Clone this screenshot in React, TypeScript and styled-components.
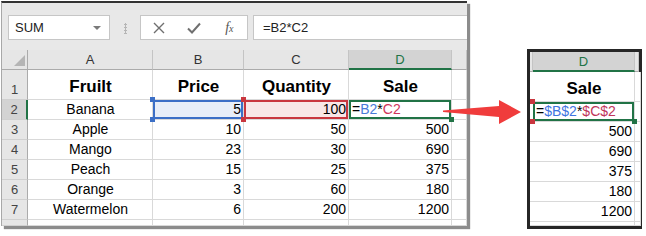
import React from "react";
import styled, { createGlobalStyle } from "styled-components";

const GREEN = "#217346";
const BLUE = "#3c6fc6";
const RED = "#c9363e";

const GlobalStyle = createGlobalStyle`
  html, body { margin: 0; padding: 0; background: #fff; }
  body { font-family: "Liberation Sans", Arial, sans-serif; color: #000; }
`;

const Page = styled.div`
  position: relative;
  width: 646px;
  height: 236px;
  box-sizing: border-box;
  padding: 1px 0 0 1px;
  display: flex;
  align-items: flex-start;
  gap: 60px;
`;

const Window = styled.div`
  width: 466px;
  box-sizing: border-box;
  border-left: 1px solid #a8a8a8;
  border-top: 2px solid #333;
  box-shadow: 3px 3px 1px #8c8c8c;
  background: #fff;
  overflow: hidden;
`;

const Toolbar = styled.div`
  height: 47px;
  box-sizing: border-box;
  padding: 12px 0 0 6px;
  background: #e8e8e8;
  display: flex;
  align-items: flex-start;
`;

const Field = styled.div<{ $w?: number }>`
  height: 25px;
  box-sizing: border-box;
  background: #fff;
  border: 1px solid #c6c6c6;
  display: flex;
  align-items: center;
  font-size: 13px;
  color: #222;
  ${(p) => (p.$w ? `width: ${p.$w}px;` : "flex: 1; border-right: none;")}
`;

const NameText = styled.span`
  padding-left: 6px;
`;

const DropArrow = styled.span`
  margin-left: auto;
  margin-right: 8px;
  width: 0;
  height: 0;
  border-left: 4px solid transparent;
  border-right: 4px solid transparent;
  border-top: 4px solid #7a7a7a;
`;

const Grip = styled.div`
  margin: 8px 13px 0 14px;
  width: 3px;
  height: 11px;
  background-image: radial-gradient(circle, #b5b5b5 1px, transparent 1.2px);
  background-size: 3px 3px;
`;

const IconSlot = styled.span`
  width: 36px;
  display: flex;
  justify-content: center;
  align-items: center;
`;

const Fx = styled.span`
  font-family: "Liberation Serif", "Times New Roman", serif;
  font-style: italic;
  font-size: 14px;
  color: #555;
  sub {
    font-size: 10px;
    vertical-align: 0;
  }
`;

const FormulaInput = styled(Field)`
  margin-left: 5px;
  padding-left: 9px;
`;

const Sheet = styled.div<{ $cols: string }>`
  display: grid;
  grid-template-columns: ${(p) => p.$cols};
`;

const ColHead = styled.div<{ $active?: boolean }>`
  height: 20px;
  box-sizing: border-box;
  background: ${(p) => (p.$active ? "#d3d3d3" : "#e6e6e6")};
  border-right: 1px solid #c4c4c4;
  border-bottom: ${(p) => (p.$active ? `2px solid ${GREEN}` : "1px solid #ababab")};
  display: flex;
  align-items: center;
  justify-content: center;
  font-size: 13px;
  color: ${(p) => (p.$active ? GREEN : "#333")};
`;

const Corner = styled(ColHead)`
  justify-content: flex-end;
  align-items: flex-end;
  padding: 0 2px 3px 0;
  border-right: 1px solid #ababab;
`;

const RowHead = styled.div<{ $active?: boolean; $h: number }>`
  height: ${(p) => p.$h}px;
  box-sizing: border-box;
  background: ${(p) => (p.$active ? "#d3d3d3" : "#e6e6e6")};
  border-right: ${(p) => (p.$active ? `2px solid ${GREEN}` : "1px solid #ababab")};
  border-bottom: 1px solid #d0d0d0;
  display: flex;
  align-items: ${(p) => (p.$h < 10 ? "flex-start" : "flex-end")};
  justify-content: center;
  padding-bottom: 2px;
  font-size: 13px;
  line-height: 15px;
  color: #444;
  overflow: hidden;
`;

type Sel = "blue" | "red" | "green";
const selColor: Record<Sel, string> = { blue: BLUE, red: RED, green: GREEN };
const selFill: Record<Sel, string> = { blue: "#e8eef8", red: "#f8e6e6", green: "#fff" };

const Cell = styled.div<{ $h: number; $align?: "left" | "center" | "right"; $bold?: boolean; $sel?: Sel }>`
  position: relative;
  height: ${(p) => p.$h}px;
  box-sizing: border-box;
  border-right: 1px solid #d9d9d9;
  border-bottom: 1px solid #d9d9d9;
  background: ${(p) => (p.$sel ? selFill[p.$sel] : "#fff")};
  ${(p) => (p.$sel ? `box-shadow: inset 0 0 0 2px ${selColor[p.$sel]};` : "")}
  display: flex;
  align-items: flex-end;
  justify-content: ${(p) =>
    p.$align === "right" ? "flex-end" : p.$align === "center" ? "center" : "flex-start"};
  padding: 0 2px 1px 3px;
  font-size: ${(p) => (p.$bold ? "17px" : "14px")};
  font-weight: ${(p) => (p.$bold ? 700 : 400)};
  line-height: ${(p) => (p.$bold ? "22px" : "17px")};
  white-space: nowrap;
`;

const Handle = styled.span<{ $pos: "tl" | "bl" | "br"; $color: string }>`
  position: absolute;
  z-index: 3;
  width: 5px;
  height: 5px;
  background: ${(p) => p.$color};
  ${(p) =>
    p.$pos === "tl"
      ? "left: -3px; top: -3px;"
      : p.$pos === "bl"
      ? "left: -3px; bottom: -3px;"
      : "right: -3px; bottom: -3px;"}
`;

const Ref = styled.span<{ $c: string }>`
  color: ${(p) => p.$c};
`;

const Snip = styled.div`
  margin-top: 48px;
  border: 3px solid #262626;
  background: #fff;
`;

const ArrowLayer = styled.svg`
  position: absolute;
  left: 0;
  top: 0;
  pointer-events: none;
  z-index: 5;
`;

const fruits = [
  { name: "Banana", price: "5", qty: "100", sale: "" },
  { name: "Apple", price: "10", qty: "50", sale: "500" },
  { name: "Mango", price: "23", qty: "30", sale: "690" },
  { name: "Peach", price: "15", qty: "25", sale: "375" },
  { name: "Orange", price: "3", qty: "60", sale: "180" },
  { name: "Watermelon", price: "6", qty: "200", sale: "1200" },
];

export default function App() {
  return (
    <>
      <GlobalStyle />
      <Page>
        <Window>
          <Toolbar>
            <Field $w={102}>
              <NameText>SUM</NameText>
              <DropArrow />
            </Field>
            <Grip />
            <Field $w={108}>
              <IconSlot>
                <svg width="12" height="12" viewBox="0 0 12 12">
                  <path d="M1 1L11 11M11 1L1 11" stroke="#6f6f6f" strokeWidth="1.4" />
                </svg>
              </IconSlot>
              <IconSlot>
                <svg width="14" height="12" viewBox="0 0 14 12">
                  <path d="M1 6.5L5 10.5L13 1.5" stroke="#6f6f6f" strokeWidth="2" fill="none" />
                </svg>
              </IconSlot>
              <IconSlot>
                <Fx>
                  f<sub>x</sub>
                </Fx>
              </IconSlot>
            </Field>
            <FormulaInput>=B2*C2</FormulaInput>
          </Toolbar>

          <Sheet $cols="26px 125px 91px 105px 103px 1fr">
            <Corner>
              <svg width="11" height="11" viewBox="0 0 11 11">
                <path d="M11 0L11 11L0 11Z" fill="#b5b5b5" />
              </svg>
            </Corner>
            <ColHead>A</ColHead>
            <ColHead>B</ColHead>
            <ColHead>C</ColHead>
            <ColHead $active>D</ColHead>
            <ColHead />

            <RowHead $h={30}>1</RowHead>
            <Cell $h={30} $align="center" $bold>Fruilt</Cell>
            <Cell $h={30} $align="center" $bold>Price</Cell>
            <Cell $h={30} $align="center" $bold>Quantity</Cell>
            <Cell $h={30} $align="center" $bold>Sale</Cell>
            <Cell $h={30} />

            {fruits.map((f, i) => {
              const first = i === 0;
              return (
                <React.Fragment key={f.name}>
                  <RowHead $h={20} $active={first}>{i + 2}</RowHead>
                  <Cell $h={20} $align="center">{f.name}</Cell>
                  <Cell $h={20} $align="right" $sel={first ? "blue" : undefined}>
                    {f.price}
                    {first && <Handle $pos="tl" $color={BLUE} />}
                    {first && <Handle $pos="bl" $color={BLUE} />}
                  </Cell>
                  <Cell $h={20} $align="right" $sel={first ? "red" : undefined}>
                    {f.qty}
                    {first && <Handle $pos="tl" $color={RED} />}
                    {first && <Handle $pos="bl" $color={RED} />}
                  </Cell>
                  {first ? (
                    <Cell $h={20} $sel="green">
                      =<Ref $c="#4a7bd8">B2</Ref>*<Ref $c="#d0365c">C2</Ref>
                      <Handle $pos="br" $color={GREEN} />
                    </Cell>
                  ) : (
                    <Cell $h={20} $align="right">{f.sale}</Cell>
                  )}
                  <Cell $h={20} />
                </React.Fragment>
              );
            })}

            <RowHead $h={6} />
            <Cell $h={6} />
            <Cell $h={6} />
            <Cell $h={6} />
            <Cell $h={6} />
            <Cell $h={6} />
          </Sheet>
        </Window>

        <Snip>
          <Sheet $cols="3px 102px 4px">
            <ColHead />
            <ColHead $active>D</ColHead>
            <ColHead />

            <Cell $h={30} />
            <Cell $h={30} $align="center" $bold>Sale</Cell>
            <Cell $h={30} />

            {fruits.map((f, i) => {
              const first = i === 0;
              return (
                <React.Fragment key={f.name}>
                  <Cell $h={20} />
                  {first ? (
                    <Cell $h={20} $sel="green">
                      =<Ref $c="#3f74e0">$B$2</Ref>*<Ref $c="#c0355a">$C$2</Ref>
                      <Handle $pos="tl" $color={RED} />
                      <Handle $pos="bl" $color={RED} />
                      <Handle $pos="br" $color={GREEN} />
                    </Cell>
                  ) : (
                    <Cell $h={20} $align="right">{f.sale}</Cell>
                  )}
                  <Cell $h={20} />
                </React.Fragment>
              );
            })}

            <Cell $h={4} />
            <Cell $h={4} />
            <Cell $h={4} />
          </Sheet>
        </Snip>

        <ArrowLayer width="646" height="236" viewBox="0 0 646 236">
          <polygon
            points="443,110.5 499,106 499,100 521,112 499,124 499,117 443,112"
            fill="#f03c3c"
          />
        </ArrowLayer>
      </Page>
    </>
  );
}
